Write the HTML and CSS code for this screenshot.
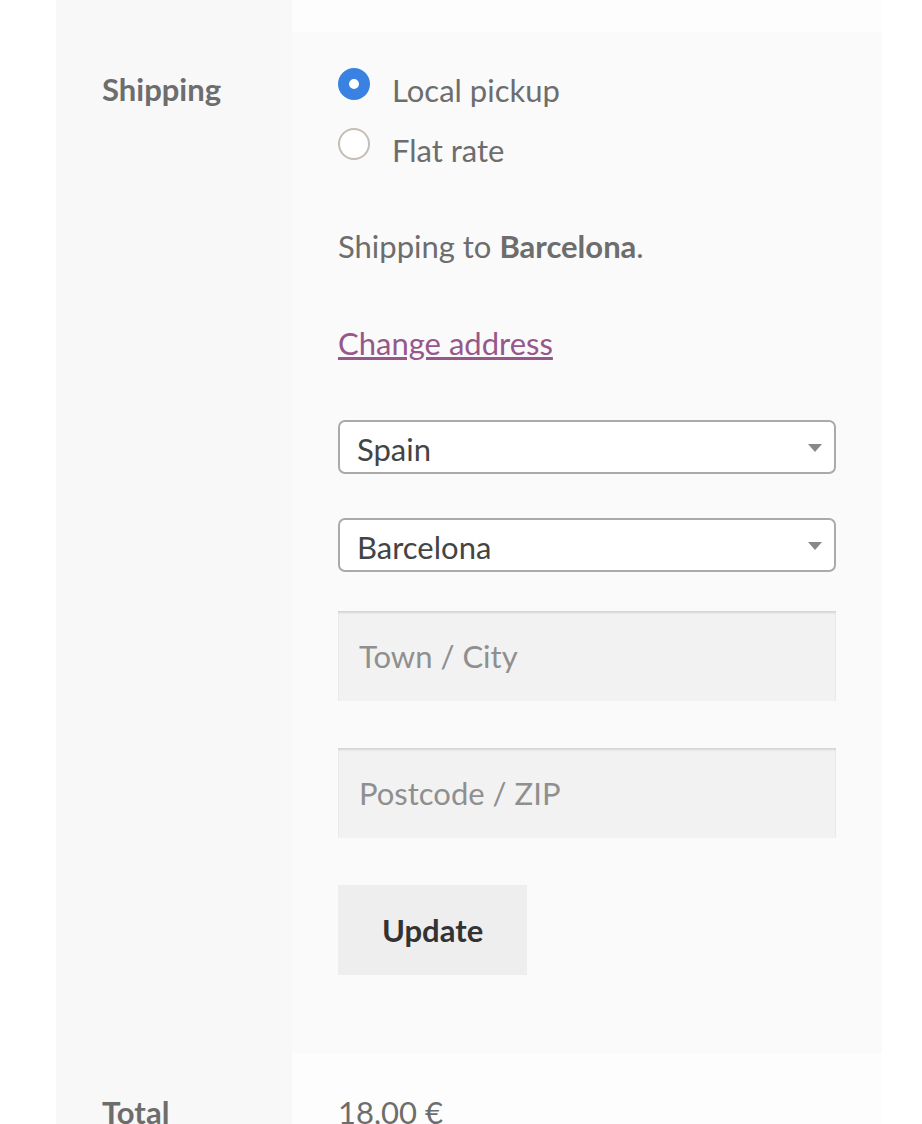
FILE: index.html
```html
<!DOCTYPE html>
<html lang="en">
<head>
    <meta charset="UTF-8">
    <meta name="viewport" content="width=device-width, initial-scale=1">
    <title>Cart totals</title>
    <link rel="stylesheet" href="styles.css">
</head>
<body>
    <table class="totals">
        <tr class="row-prev">
            <th></th>
            <td></td>
        </tr>
        <tr class="row-shipping">
            <th>Shipping</th>
            <td>
                <ul class="methods">
                    <li>
                        <input type="radio" name="method" id="local" checked>
                        <label for="local">Local pickup</label>
                    </li>
                    <li>
                        <input type="radio" name="method" id="flat">
                        <label for="flat">Flat rate</label>
                    </li>
                </ul>
                <p class="destination">Shipping to <strong>Barcelona</strong>.</p>
                <p class="change"><a href="#">Change address</a></p>
                <form class="calc">
                    <div class="select-wrap">
                        <select>
                            <option>Spain</option>
                        </select>
                    </div>
                    <div class="select-wrap">
                        <select>
                            <option>Barcelona</option>
                        </select>
                    </div>
                    <input type="text" class="field" placeholder="Town / City">
                    <input type="text" class="field" placeholder="Postcode / ZIP">
                    <button type="button" class="update">Update</button>
                </form>
            </td>
        </tr>
        <tr class="row-total">
            <th>Total</th>
            <td>18,00 €</td>
        </tr>
    </table>
</body>
</html>
```

FILE: styles.css
```css
body {
    margin: 0;
    background-color: #fff;
    font-family: 'Lato', 'Liberation Sans', sans-serif;
    font-size: 31px;
    line-height: 42px;
    color: #6d6d6d;
}
.totals {
    margin-left: 56px;
    width: 826px;
    table-layout: fixed;
    border-collapse: collapse;
    border-spacing: 0;
}
.totals th {
    width: 144px;
    padding: 36px 46px;
    background-color: #f8f8f8;
    text-align: left;
    vertical-align: top;
    font-weight: 700;
}
.totals td {
    padding: 36px 46px;
    background-color: #fdfdfd;
    vertical-align: top;
}
.row-prev th,
.row-prev td {
    height: 32px;
    padding: 0;
}
.row-prev th {
    width: 236px;
}
.row-shipping th {
    padding-top: 36px;
}
.row-shipping td {
    padding-top: 28px;
    padding-bottom: 78px;
    background-color: #fafafa;
}
.row-total th,
.row-total td {
    padding-top: 38px;
}
.methods {
    list-style: none;
    margin: 0;
    padding: 0;
}
.methods li {
    display: flex;
    align-items: center;
    height: 60px;
}
.methods input {
    appearance: none;
    -webkit-appearance: none;
    width: 32px;
    height: 32px;
    margin: -12px 22px 0 0;
    border-radius: 50%;
    border: 2px solid #c4beb7;
    background-color: #fff;
    box-sizing: border-box;
}
.methods input:checked {
    border: 11px solid #3a82e1;
}
.destination {
    margin: 45px 0 0;
}
.destination strong {
    font-weight: 700;
}
.change {
    margin: 55px 0 0;
}
.change a {
    color: #96588a;
}
.calc {
    display: flex;
    flex-direction: column;
    align-items: flex-start;
    margin-top: 56px;
}
.select-wrap {
    position: relative;
    width: 498px;
    margin-bottom: 44px;
}
.select-wrap + .select-wrap {
    margin-bottom: 39px;
}
.select-wrap::after {
    content: '';
    position: absolute;
    right: 14px;
    top: 24px;
    border-left: 7px solid transparent;
    border-right: 7px solid transparent;
    border-top: 8px solid #888;
}
select {
    appearance: none;
    -webkit-appearance: none;
    width: 100%;
    height: 54px;
    padding: 4px 17px 0;
    border: 2px solid #aaa;
    border-radius: 7px;
    background-color: #fff;
    font-family: inherit;
    font-size: 31px;
    color: #444;
}
.field {
    width: 498px;
    height: 90px;
    margin: 0 0 47px;
    padding: 0 21px;
    box-sizing: border-box;
    border: 0;
    background-color: #f2f2f2;
    box-shadow: inset 0 2px 2px rgba(0, 0, 0, 0.12);
    font-family: inherit;
    font-size: 31px;
    color: #43454b;
}
.field::placeholder {
    color: #8f8f8f;
}
.update {
    height: 90px;
    padding: 0 44px;
    border: 0;
    background-color: #eee;
    font-family: inherit;
    font-size: 31px;
    font-weight: 700;
    color: #333;
}
```
